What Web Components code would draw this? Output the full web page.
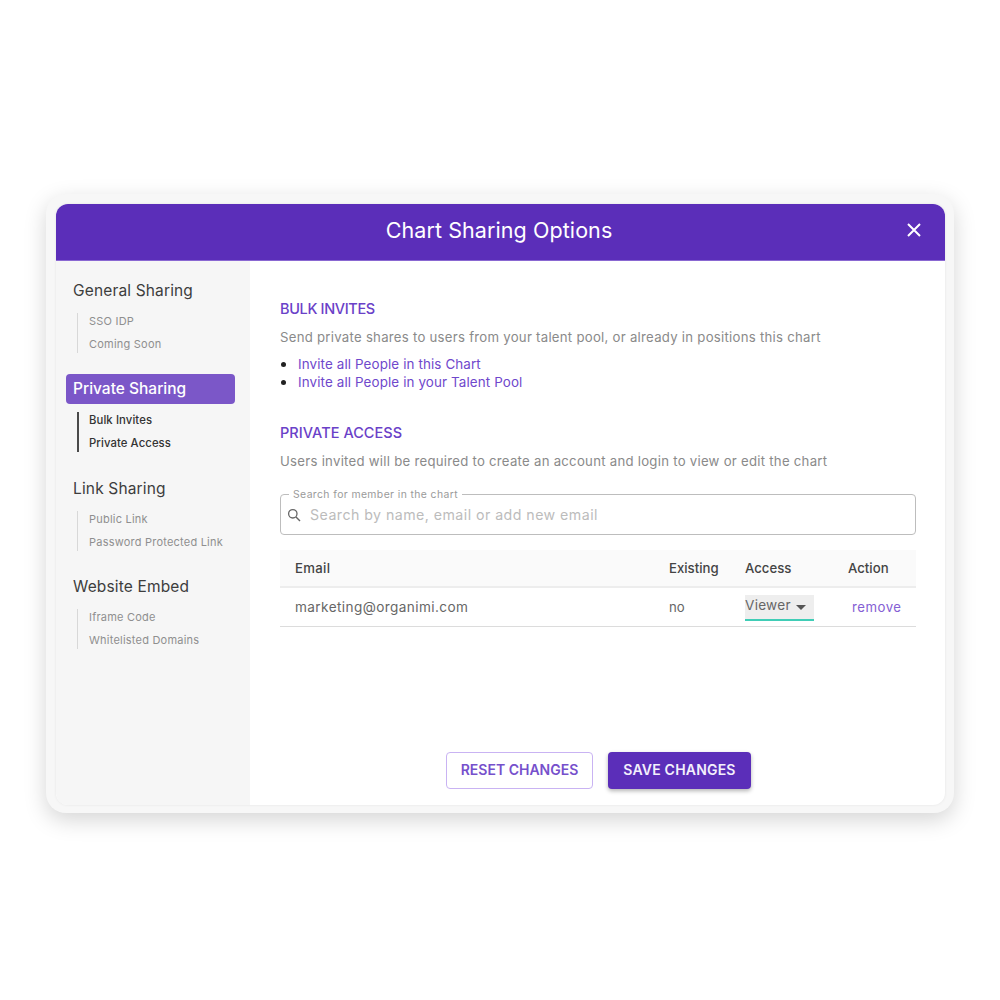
<!DOCTYPE html>
<html><head><meta charset="utf-8"><title>Chart Sharing Options</title>
<style>
html,body{margin:0;padding:0;background:#fff;font-family:Inter,"Open Sans",sans-serif}
body{height:1000px;overflow:hidden;padding-top:194px;box-sizing:border-box}
</style></head><body>
<share-modal>
  <span slot="title">Chart Sharing Options</span>
  <side-group slot="side" label="General Sharing"><span>SSO IDP</span><span>Coming Soon</span></side-group>
  <side-group slot="side" label="Private Sharing" active style="padding-bottom:3px"><span>Bulk Invites</span><span>Private Access</span></side-group>
  <side-group slot="side" label="Link Sharing" style="padding-bottom:2px"><span>Public Link</span><span>Password Protected Link</span></side-group>
  <side-group slot="side" label="Website Embed"><span>Iframe Code</span><span>Whitelisted Domains</span></side-group>
  <bulk-section></bulk-section>
  <access-section></access-section>
  <modal-actions slot="actions"></modal-actions>
</share-modal>
<script>
const def=(n,html)=>{customElements.define(n,class extends HTMLElement{
  connectedCallback(){ if(this.shadowRoot)return; const r=this.attachShadow({mode:'open'}); r.innerHTML=typeof html==='function'?html(this):html; }
});};
def('share-modal',`<style>
:host{display:block;width:908px;height:619px;margin-left:46px;box-sizing:border-box;padding:10px 9px 8px 10px;background:#f7f7f7;border-radius:20px;box-shadow:0 7px 22px rgba(0,0,0,.17)}
.m{height:601px;border-radius:12px;overflow:hidden;display:flex;flex-direction:column;background:#fff;box-shadow:0 0 3px rgba(0,0,0,.08)}
header{height:57px;flex:none;box-sizing:border-box;background:#5b2eb9;border-bottom:1px solid #8a68d2;display:flex;align-items:center;justify-content:center;position:relative;color:#fff;font-size:21.5px;letter-spacing:.08px;font-weight:400;padding:0 3px 5px 0}
header svg{position:absolute;left:850px;top:18px}
.b{flex:1;display:flex;min-height:0}
aside{width:194px;flex:none;background:#f6f6f6;box-sizing:border-box;padding:17px 15px 0 10px;display:flex;flex-direction:column;gap:21.5px}
main{flex:1;box-sizing:border-box;padding:38px 29px 16px 30px;display:flex;flex-direction:column}
.g{flex:1}
</style><div class="m"><header><slot name="title"></slot><svg width="16" height="16" viewBox="0 0 16 16"><path d="M2 2 14 14M14 2 2 14" stroke="#fff" stroke-width="2" fill="none"/></svg></header>
<div class="b"><aside><slot name="side"></slot></aside><main><slot></slot><div class="g"></div><slot name="actions"></slot></main></div></div>`);
def('side-group',h=>{const a=h.hasAttribute('active');return `<style>
:host{display:block}
.t{height:${a?30:24}px;line-height:${a?30:26}px;padding:0 7px;font-size:15.5px;color:${a?'#fff':'#3d3d3d'};border-radius:4px;${a?'background:#7b57c8;font-weight:500;letter-spacing:0;':'letter-spacing:.15px;'}white-space:nowrap}
.l{margin:${a?'8px':'11px'} 0 0 11px;border-left:${a?'2px solid #4a4a4a':'1px solid #d8d8d8'};padding:1px 0 0 ${a?'10px':'11px'};display:flex;flex-direction:column;gap:7.5px;font-size:${a?'11.3px':'11px'};letter-spacing:${a?'.1px':'.22px'};line-height:15.5px;color:${a?'#333':'#8f8f8f'};${a?'font-weight:500;':''}white-space:nowrap}
::slotted(span){display:block}
</style><div class="t">${h.getAttribute('label')}</div><div class="l"><slot></slot></div>`});
const headStyle=`.h{font-size:14.5px;line-height:20px;color:#6a41c8;font-weight:500}.p{font-size:13.2px;line-height:20px;color:#8a8a8a;margin-top:8px;white-space:nowrap;letter-spacing:.26px}`;
def('bulk-section',`<style>:host{display:block}${headStyle}
ul{margin:8px 0 0 1px;padding:0;list-style:none;font-size:13.4px;line-height:18px;color:#6f48cc;letter-spacing:.12px}
li{display:flex;align-items:center;gap:12px}li::before{content:"";width:5px;height:5px;border-radius:50%;background:#222}
</style><div class="h" style="letter-spacing:-.35px">BULK INVITES</div><div class="p">Send private shares to users from your talent pool, or already in positions this chart</div>
<ul><li>Invite all People in this Chart</li><li>Invite all People in your Talent Pool</li></ul>`);
def('access-section',`<style>:host{display:block;margin-top:32px}${headStyle}
</style><div class="h" style="letter-spacing:.05px">PRIVATE ACCESS</div><div class="p">Users invited will be required to create an account and login to view or edit the chart</div>
<search-field></search-field><member-table></member-table>`);
def('search-field',`<style>
:host{display:block;margin-top:23px;position:relative;height:41px;box-sizing:border-box;border:1px solid #bdbdbd;border-radius:4px}
.lg{position:absolute;left:8px;top:-7px;padding:0 4px;background:#fff;font-size:10.4px;line-height:13px;color:#9a9a9a;white-space:nowrap;letter-spacing:.4px}
.r{height:100%;display:flex;align-items:center;gap:9px;padding-left:6px;font-size:14.2px;letter-spacing:.45px;color:#bcbcbc;white-space:nowrap}
</style><span class="lg">Search for member in the chart</span><div class="r"><svg width="14" height="14" viewBox="0 0 14 14"><circle cx="5.8" cy="5.8" r="4.2" stroke="#666" stroke-width="1.3" fill="none"/><path d="M9 9 13 13" stroke="#666" stroke-width="1.4"/></svg><span>Search by name, email or add new email</span></div>`);
def('member-table',`<style>
:host{display:block;margin-top:15px;font-size:13.2px;color:#666}
.row{display:grid;grid-template-columns:374px 76px 103px 1fr;padding-left:15px;align-items:center}
.hd{height:38px;box-sizing:border-box;background:#fafafa;border-bottom:2px solid #ededed;color:#444;font-weight:500}
.hd span:first-child{letter-spacing:.3px}
.bd{height:39px;box-sizing:border-box;border-bottom:1px solid #dcdcdc}
.em{font-size:13.6px;letter-spacing:.4px}
.sel{width:69px;height:26px;box-sizing:border-box;background:#eee;border-bottom:2px solid #3fcdb6;display:flex;align-items:center;gap:5px;font-size:13.6px;letter-spacing:.25px;color:#666;margin-top:1px;padding-bottom:3px}
.sel i{width:0;height:0;border:5px solid transparent;border-top:5px solid #555;border-bottom:0;margin-top:5px}
.rm{color:#8460d4;padding-left:4px;letter-spacing:.5px}
</style><div class="row hd"><span>Email</span><span>Existing</span><span>Access</span><span>Action</span></div>
<div class="row bd"><span class="em">marketing@organimi.com</span><span>no</span><span class="sel">Viewer<i></i></span><span class="rm">remove</span></div>`);
def('modal-actions',`<style>
:host{display:flex;justify-content:center;gap:15px;padding-left:1px}
button{all:unset;box-sizing:border-box;height:37px;display:flex;align-items:center;justify-content:center;border-radius:4px;font-family:Inter,sans-serif;font-size:14px;font-weight:600;white-space:nowrap;padding-bottom:2px}
.a{width:147px;background:#fff;border:1px solid #c9b3f3;color:#7650cc}
.s{width:143px;background:#5b2eb9;color:#f3effc;box-shadow:0 2px 4px rgba(0,0,0,.3);letter-spacing:.2px}
</style><button class="a">RESET CHANGES</button><button class="s">SAVE CHANGES</button>`);
</script></body></html>
